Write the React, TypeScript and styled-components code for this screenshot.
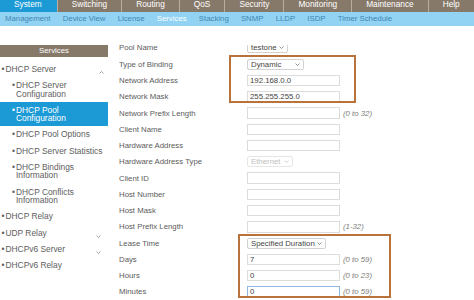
import styled, { createGlobalStyle } from "styled-components";

const GlobalStyle = createGlobalStyle`
  html, body {
    margin: 0;
    padding: 0;
    background: #fff;
  }
  body {
    font-family: "Liberation Sans", Arial, sans-serif;
  }
`;

const Page = styled.div`
  position: relative;
  width: 474px;
  height: 300px;
  overflow: hidden;
  background: #fff;
`;

const TabBar = styled.div`
  display: flex;
  height: 12px;
  background: #87796a;
  white-space: nowrap;
  overflow: hidden;
`;

const Tab = styled.div<{ $active?: boolean }>`
  padding: 0 14px;
  font-size: 8.3px;
  line-height: 9px;
  color: #fff;
  background: ${(p) => (p.$active ? "#1c9ad6" : "transparent")};
  border-left: ${(p) => (p.$active ? "none" : "1px solid #b8ada1")};
  &:first-child {
    padding-right: 15px;
  }
`;

const SubNav = styled.div`
  display: flex;
  height: 13.5px;
  align-items: center;
  background: #92d3f3;
  padding-left: 0;
`;

const SubItem = styled.div<{ $active?: boolean }>`
  padding: 0 6.1px;
  font-size: 7.8px;
  color: ${(p) => (p.$active ? "#fff" : "#3f86b2")};
  &:first-child {
    padding-left: 5px;
  }
`;

const Main = styled.div`
  display: flex;
  padding-top: 19.5px;
`;

const Sidebar = styled.div`
  width: 108px;
  flex: none;
`;

const SideHeader = styled.div`
  height: 12px;
  line-height: 12px;
  background: #87796a;
  color: #fff;
  font-size: 7.8px;
  text-align: center;
`;

const SideList = styled.div`
  padding-top: 4px;
  width: 107.5px;
`;

const NavItem = styled.div<{ $sub?: boolean; $active?: boolean }>`
  display: flex;
  align-items: flex-start;
  padding: 4px 4px 4px ${(p) => (p.$sub ? "12px" : "1.5px")};
  font-size: 8.4px;
  line-height: 8.3px;
  color: ${(p) => (p.$active ? "#fff" : "#5e5e5e")};
  background: ${(p) => (p.$active ? "#1c9ad6" : "transparent")};
`;

const Bullet = styled.span`
  width: 4px;
  flex: none;
`;

const NavText = styled.span`
  flex: 1;
`;

const Caret = styled.svg<{ $shift?: number }>`
  flex: none;
  width: 5px;
  height: 4px;
  margin-top: 2px;
  margin-right: ${(p) => p.$shift ?? 0}px;
`;

const Content = styled.div`
  flex: 1;
  height: 255.5px;
  overflow: hidden;
  padding-left: 11px;
`;

const Form = styled.div`
  margin-top: -5.2px;
`;

const Row = styled.div`
  display: flex;
  align-items: center;
  height: 16.27px;
`;

const Label = styled.div`
  width: 128px;
  flex: none;
  font-size: 7.8px;
  color: #5c5c5c;
  white-space: nowrap;
`;

const TextInput = styled.input<{ $focus?: boolean }>`
  box-sizing: border-box;
  width: 93px;
  height: 11.5px;
  margin: 0;
  padding: 0 2px;
  border: 1px solid ${(p) => (p.$focus ? "#8fb8e2" : "#dcdcdc")};
  border-radius: 0;
  font-family: "Liberation Sans", Arial, sans-serif;
  font-size: 7.8px;
  color: #444;
  background: #fff;
  outline: none;
`;

const FakeSelect = styled.div<{ $width: number; $disabled?: boolean }>`
  box-sizing: border-box;
  display: flex;
  align-items: center;
  justify-content: space-between;
  width: ${(p) => p.$width}px;
  height: 11px;
  padding: 0 3px;
  border: 1px solid ${(p) => (p.$disabled ? "#e6e6e6" : "#d2d2d2")};
  border-radius: 2px;
  font-size: 7.8px;
  color: ${(p) => (p.$disabled ? "#bdbdbd" : "#444")};
`;

const Hint = styled.span`
  margin-left: 3px;
  font-size: 7.8px;
  font-style: italic;
  color: #7c7c7c;
`;

const Annotation = styled.div<{ $x: number; $y: number; $w: number; $h: number }>`
  position: absolute;
  left: ${(p) => p.$x}px;
  top: ${(p) => p.$y}px;
  width: ${(p) => p.$w}px;
  height: ${(p) => p.$h}px;
  box-sizing: border-box;
  border: 2px solid #b7733b;
  pointer-events: none;
`;

const Chevron = ({ up, color = "#777" }: { up?: boolean; color?: string }) => (
  <svg width="5" height="3" viewBox="0 0 5 3">
    <path
      d={up ? "M0.5 2.5 L2.5 0.5 L4.5 2.5" : "M0.5 0.5 L2.5 2.5 L4.5 0.5"}
      fill="none"
      stroke={color}
      strokeWidth="0.8"
    />
  </svg>
);

const tabs = ["System", "Switching", "Routing", "QoS", "Security", "Monitoring", "Maintenance", "Help"];
const subTabs = ["Management", "Device View", "License", "Services", "Stacking", "SNMP", "LLDP", "ISDP", "Timer Schedule"];

type Nav = { text: string; sub?: boolean; active?: boolean; caret?: "up" | "down" };

const navItems: Nav[] = [
  { text: "DHCP Server", caret: "up" },
  { text: "DHCP Server Configuration", sub: true },
  { text: "DHCP Pool Configuration", sub: true, active: true },
  { text: "DHCP Pool Options", sub: true },
  { text: "DHCP Server Statistics", sub: true },
  { text: "DHCP Bindings Information", sub: true },
  { text: "DHCP Conflicts Information", sub: true },
  { text: "DHCP Relay" },
  { text: "UDP Relay", caret: "down" },
  { text: "DHCPv6 Server", caret: "down" },
  { text: "DHCPv6 Relay" },
];

type Field =
  | { label: string; kind: "input"; value?: string; hint?: string; focus?: boolean }
  | { label: string; kind: "select"; value: string; width: number; disabled?: boolean };

const fields: Field[] = [
  { label: "Pool Name", kind: "select", value: "testone", width: 41 },
  { label: "Type of Binding", kind: "select", value: "Dynamic", width: 57 },
  { label: "Network Address", kind: "input", value: "192.168.0.0" },
  { label: "Network Mask", kind: "input", value: "255.255.255.0" },
  { label: "Network Prefix Length", kind: "input", hint: "(0 to 32)" },
  { label: "Client Name", kind: "input" },
  { label: "Hardware Address", kind: "input" },
  { label: "Hardware Address Type", kind: "select", value: "Ethernet", width: 46, disabled: true },
  { label: "Client ID", kind: "input" },
  { label: "Host Number", kind: "input" },
  { label: "Host Mask", kind: "input" },
  { label: "Host Prefix Length", kind: "input", hint: "(1-32)" },
  { label: "Lease Time", kind: "select", value: "Specified Duration", width: 79 },
  { label: "Days", kind: "input", value: "7", hint: "(0 to 59)" },
  { label: "Hours", kind: "input", value: "0", hint: "(0 to 23)" },
  { label: "Minutes", kind: "input", value: "0", hint: "(0 to 59)", focus: true },
];

const App = () => {
  return (
    <Page>
      <GlobalStyle />
      <TabBar>
        {tabs.map((t, i) => (
          <Tab key={t} $active={i === 0}>
            {t}
          </Tab>
        ))}
      </TabBar>
      <SubNav>
        {subTabs.map((t) => (
          <SubItem key={t} $active={t === "Services"}>
            {t}
          </SubItem>
        ))}
      </SubNav>

      <Main>
        <Sidebar>
          <SideHeader>Services</SideHeader>
          <SideList>
            {navItems.map((n) => (
              <NavItem key={n.text} $sub={n.sub} $active={n.active}>
                <Bullet>•</Bullet>
                <NavText>{n.text}</NavText>
                {n.caret && (
                  <Caret as="span" $shift={n.caret === "up" ? 0 : 3}>
                    <Chevron up={n.caret === "up"} color="#888" />
                  </Caret>
                )}
              </NavItem>
            ))}
          </SideList>
        </Sidebar>

        <Content>
          <Form>
            {fields.map((f) => (
              <Row key={f.label}>
                <Label>{f.label}</Label>
                {f.kind === "select" ? (
                  <FakeSelect $width={f.width} $disabled={f.disabled}>
                    <span>{f.value}</span>
                    <Chevron color={f.disabled ? "#c4c4c4" : "#777"} />
                  </FakeSelect>
                ) : (
                  <>
                    <TextInput defaultValue={f.value ?? ""} $focus={f.focus} />
                    {f.hint && <Hint>{f.hint}</Hint>}
                  </>
                )}
              </Row>
            ))}
          </Form>
        </Content>
      </Main>

      <Annotation $x={229} $y={55} $w={127} $h={48} />
      <Annotation $x={238} $y={234} $w={153} $h={64} />
    </Page>
  );
};

export default App;
